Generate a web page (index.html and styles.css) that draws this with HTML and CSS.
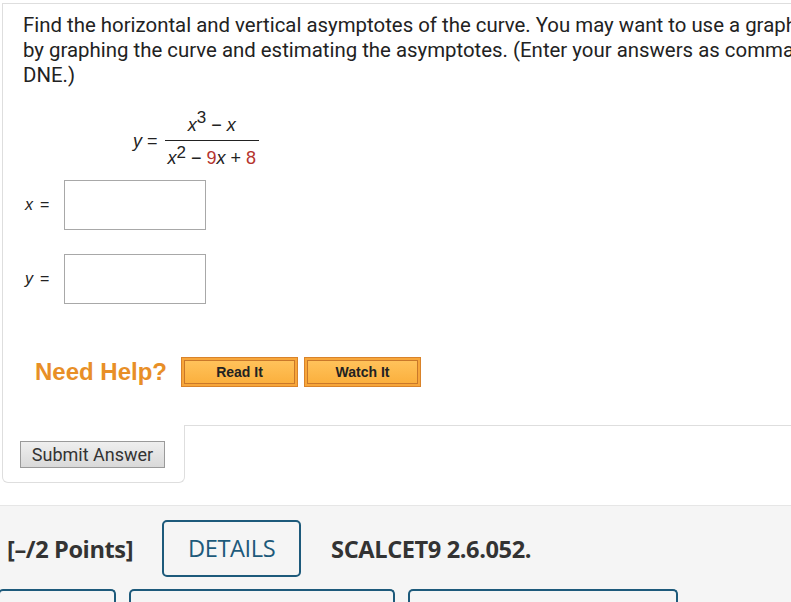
FILE: index.html
```html
<!DOCTYPE html>
<html>
<head>
<meta charset="utf-8">
<link rel="stylesheet" href="styles.css">
</head>
<body>
<div class="card">
  <div class="question">
    <p class="prompt">Find the horizontal and vertical asymptotes of the curve. You may want to use a graphing calculator (or computer) to check your work<br>by graphing the curve and estimating the asymptotes. (Enter your answers as comma-separated lists. If an answer does not exist, enter<br>DNE.)</p>
    <div class="math">
      <span class="lhs"><i>y</i> =</span>
      <span class="frac">
        <span class="num"><i>x</i><sup>3</sup> &minus; <i>x</i></span>
        <span class="den"><i>x</i><sup>2</sup> &minus; <span class="red">9</span><i>x</i> + <span class="red">8</span></span>
      </span>
    </div>
    <div class="answer-row">
      <span class="var"><i>x</i></span><span class="eq">=</span><span class="box"></span>
    </div>
    <div class="answer-row second">
      <span class="var"><i>y</i></span><span class="eq">=</span><span class="box"></span>
    </div>
    <div class="help">
      <span class="help-label">Need Help?</span>
      <span class="help-btn"><span class="help-inner">Read It</span></span>
      <span class="help-btn"><span class="help-inner">Watch It</span></span>
    </div>
  </div>
  <div class="footer-row">
    <div class="submit-cell"><span class="submit-btn">Submit Answer</span></div>
    <div class="filler"></div>
  </div>
</div>
<div class="next">
  <div class="next-head">
    <span class="points">[&ndash;/2 Points]</span>
    <span class="details">DETAILS</span>
    <span class="code">SCALCET9 2.6.052.</span>
  </div>
  <div class="tabs">
    <span class="tab t1"></span>
    <span class="tab t2"></span>
    <span class="tab t3"></span>
  </div>
</div>
</body>
</html>
```
FILE: styles.css
```css
html, body {
  margin: 0;
  padding: 0;
  background: #fff;
  overflow: hidden;
}
body {
  width: 791px;
  height: 602px;
  font-family: Roboto, "Liberation Sans", sans-serif;
  color: #222;
}
.card {
  margin: 3px 0 0 2px;
  width: 1000px;
}
.question {
  border-top: 1px solid #dedede;
  border-left: 1px solid #dedede;
  height: 422px;
  padding-left: 20px;
  box-sizing: border-box;
}
.prompt {
  margin: 0;
  padding-top: 9px;
  white-space: nowrap;
  font-size: 20.4px;
  line-height: 25px;
  height: 75px;
}
.math {
  display: flex;
  align-items: center;
  margin: 27px 0 0 110px;
  font-family: "Liberation Sans", Arial, sans-serif;
  font-size: 18px;
  color: #222;
}
.math i { font-style: italic; }
.lhs {
  margin-right: 7px;
}
.frac {
  display: inline-flex;
  flex-direction: column;
  align-items: center;
}
.num {
  padding: 0 10px 5px;
  line-height: 20px;
}
.den {
  border-top: 1px solid #222;
  padding: 7px 3px 0;
  line-height: 20px;
}
sup {
  font-size: 17px;
  line-height: 0;
  vertical-align: 8px;
}
.den sup {
  vertical-align: 6px;
}
.red { color: #b5332e; }
.answer-row {
  display: flex;
  align-items: center;
  margin-top: 12px;
  font-family: "Liberation Sans", Arial, sans-serif;
  font-size: 16px;
}
.answer-row.second { margin-top: 24px; }
.var {
  width: 15px;
  padding-left: 2px;
}
.eq { width: 24px; }
.box {
  width: 140px;
  height: 48px;
  border: 1px solid #a8a8a8;
}
.help {
  display: flex;
  align-items: center;
  margin: 53px 0 0 12px;
  font-family: "Liberation Sans", Arial, sans-serif;
}
.help-label {
  color: #e88f27;
  font-weight: bold;
  font-size: 24px;
  margin-right: 14px;
}
.help-btn {
  display: inline-block;
  padding: 2px;
  background: #f7a63a;
  border: 1px solid #d9832a;
  margin-right: 6px;
}
.help-inner {
  display: block;
  width: 109px;
  height: 22px;
  line-height: 22px;
  text-align: center;
  background: linear-gradient(#ffc25a, #fbb03e);
  border: 1px solid #c9782a;
  font-weight: bold;
  font-size: 14px;
  color: #222;
}
.footer-row {
  display: flex;
}
.submit-cell {
  width: 183px;
  box-sizing: border-box;
  border-left: 1px solid #dedede;
  border-right: 1px solid #dedede;
  border-bottom: 1px solid #dedede;
  border-radius: 0 0 6px 6px;
  padding: 16px 0 14px 17px;
}
.submit-btn {
  display: inline-block;
  box-sizing: border-box;
  width: 145px;
  height: 27px;
  line-height: 25px;
  text-align: center;
  border: 1px solid #9a9a9a;
  background: linear-gradient(#efefef, #d9d9d9);
  font-size: 18px;
  color: #333;
}
.filler {
  flex: 1;
  border-top: 1px solid #dedede;
}
.next {
  margin-top: 22px;
  background: #f5f5f5;
  border-top: 1px solid #e6e6e6;
  height: 100px;
  font-family: "Open Sans", sans-serif;
}
.next-head {
  display: flex;
  align-items: center;
  padding: 14px 0 0 7px;
  color: #333;
}
.points {
  font-weight: bold;
  font-size: 23.6px;
  margin-right: 29px;
  letter-spacing: -0.4px;
}
.details {
  box-sizing: border-box;
  width: 139px;
  height: 57px;
  line-height: 53px;
  text-align: center;
  border: 2px solid #1d5a7b;
  border-radius: 5px;
  color: #1d5a7b;
  font-size: 23.6px;
  margin-right: 30px;
  letter-spacing: -0.4px;
}
.code {
  font-weight: bold;
  font-size: 23.6px;
  letter-spacing: -0.4px;
}
.tabs {
  display: flex;
  margin-top: 12px;
  padding-left: 0;
}
.tab {
  height: 20px;
  border: 2px solid #1d5a7b;
  border-bottom: none;
  border-radius: 5px 5px 0 0;
  box-sizing: border-box;
}
.t1 { width: 118px; margin-left: -2px; margin-right: 13px; }
.t2 { width: 266px; margin-right: 13px; }
.t3 { width: 270px; }
```
